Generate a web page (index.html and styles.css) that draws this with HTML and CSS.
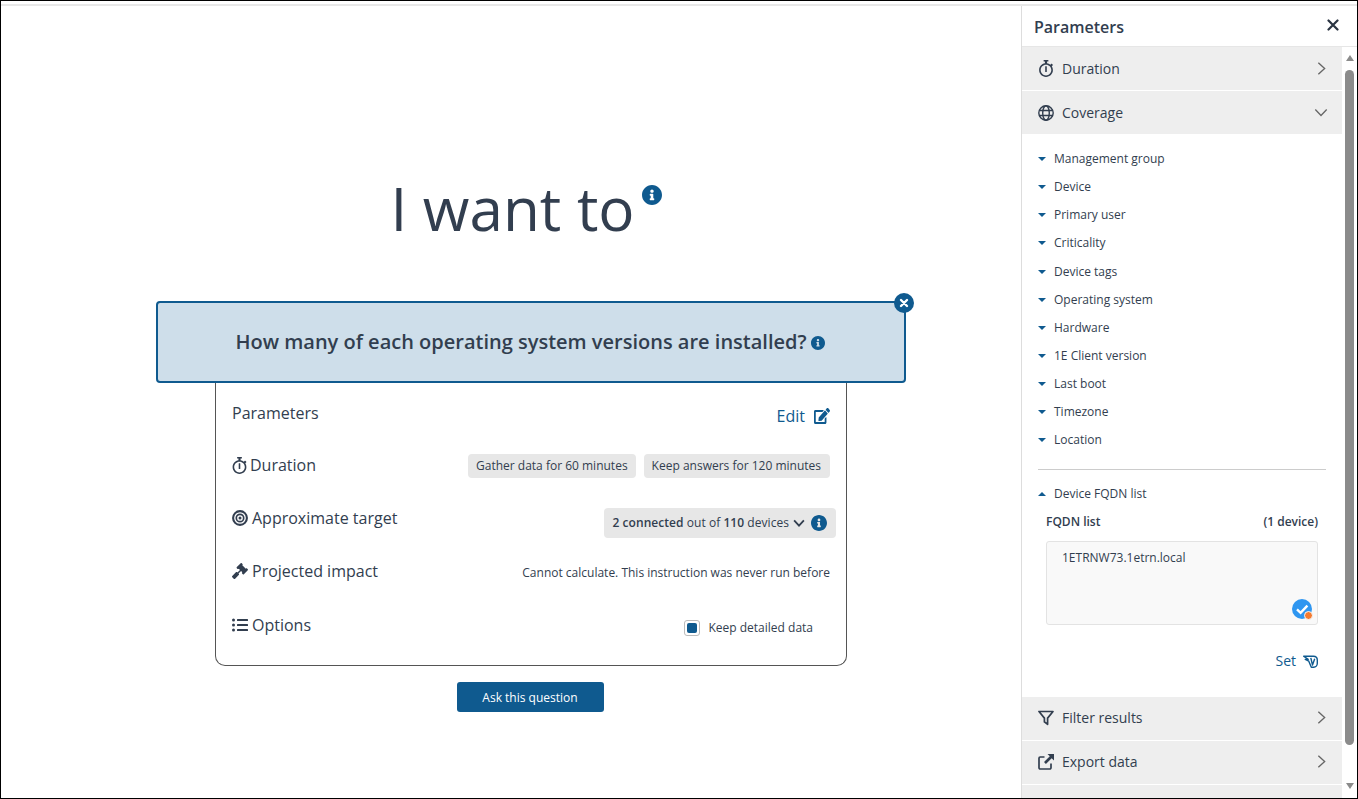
FILE: index.html
```html
<!DOCTYPE html>
<html lang="en">
<head>
<meta charset="utf-8">
<title>Parameters</title>
<link rel="stylesheet" href="styles.css">
</head>
<body>
<svg class="defs" width="0" height="0" aria-hidden="true">
  <symbol id="info" viewBox="8 8 496 496"><path fill="#0f5a8f" d="M256 8C119.043 8 8 119.083 8 256c0 136.997 111.043 248 248 248s248-111.003 248-248C504 119.083 392.957 8 256 8zm0 110c23.196 0 42 18.804 42 42s-18.804 42-42 42-42-18.804-42-42 18.804-42 42-42zm56 254c0 6.627-5.373 12-12 12h-88c-6.627 0-12-5.373-12-12v-24c0-6.627 5.373-12 12-12h12v-64h-12c-6.627 0-12-5.373-12-12v-24c0-6.627 5.373-12 12-12h64c6.627 0 12 5.373 12 12v100h12c6.627 0 12 5.373 12 12v24z"/></symbol>
  <symbol id="close-dot" viewBox="0 0 20 20"><circle cx="10" cy="10" r="10" fill="#0f5a8f"/><path d="M7 7l6 6M13 7l-6 6" stroke="#fff" stroke-width="2.400" stroke-linecap="round"/></symbol>
  <symbol id="watch" viewBox="0 0 448 512"><path fill="currentColor" d="M432 304c0 114.900-93.100 208-208 208S16 418.900 16 304c0-104 76.300-190.200 176-205.500V48h-28c-6.600 0-12-5.400-12-12V12c0-6.600 5.400-12 12-12h120c6.600 0 12 5.400 12 12v24c0 6.600-5.400 12-12 12h-28v50.500c37.500 5.800 71.700 21.600 99.700 44.600l27.500-27.500c4.700-4.700 12.300-4.700 17 0l28.300 28.300c4.700 4.700 4.700 12.300 0 17l-29.400 29.400-.6.600C419.700 223.300 432 262.200 432 304zm-48 0c0-88.400-71.600-160-160-160S64 215.600 64 304s71.600 160 160 160 160-71.600 160-160zm-136 48V200c0-6.600-5.400-12-12-12h-24c-6.600 0-12 5.400-12 12v152c0 6.600 5.400 12 12 12h24c6.600 0 12-5.400 12-12z"/></symbol>
  <symbol id="chev-r" viewBox="0 0 10 16"><path d="M1.500 1.500L8.500 8l-7 6.500" fill="none" stroke="currentColor" stroke-width="1.500"/></symbol>
  <symbol id="chev-d" viewBox="0 0 16 10"><path d="M1.500 1.500L8 8.500l6.500-7" fill="none" stroke="currentColor" stroke-width="1.500"/></symbol>
  <symbol id="chev-bold" viewBox="0 0 16 10"><path d="M1.500 1.500L8 8.500l6.500-7" fill="none" stroke="currentColor" stroke-width="2.400"/></symbol>
  <symbol id="globe" viewBox="0 0 16 16"><g fill="none" stroke="currentColor" stroke-width="1.400"><circle cx="8" cy="8" r="7.200"/><ellipse cx="8" cy="8" rx="3.300" ry="7.200"/><path d="M1 5.500h14M1 10.500h14"/></g></symbol>
  <symbol id="funnel" viewBox="0 0 16 15"><path d="M1 1h14L9.600 7.600V13.800L6.400 11.400V7.600z" fill="none" stroke="currentColor" stroke-width="1.700" stroke-linejoin="round"/></symbol>
  <symbol id="export" viewBox="0 0 16 16"><path d="M6.500 3H2.200A1.200 1.200 0 0 0 1 4.200v9.600A1.200 1.200 0 0 0 2.200 15h9.600a1.200 1.200 0 0 0 1.200-1.200V9.500" fill="none" stroke="currentColor" stroke-width="1.700"/><path d="M9.500 0H16v6.500l-2.300-2.300-5.800 5.800-1.900-1.900 5.800-5.800z" fill="currentColor"/></symbol>
  <symbol id="target" viewBox="0 0 16 16"><g fill="none" stroke="currentColor"><circle cx="8" cy="8" r="6.900" stroke-width="2.100"/><circle cx="8" cy="8" r="3.700" stroke-width="1.700"/></g><circle cx="8" cy="8" r="1.500" fill="currentColor"/></symbol>
  <symbol id="gavel" viewBox="0 0 512 512"><path fill="currentColor" d="M504.971 199.362l-22.627-22.627c-9.373-9.373-24.569-9.373-33.941 0l-5.657 5.657L329.608 69.255l5.657-5.657c9.373-9.373 9.373-24.569 0-33.941L312.638 7.029c-9.373-9.373-24.569-9.373-33.941 0L154.246 131.480c-9.373 9.373-9.373 24.569 0 33.941l22.627 22.627c9.373 9.373 24.569 9.373 33.941 0l5.657-5.657 39.598 39.598-81.040 81.040-5.657-5.657c-12.497-12.497-32.758-12.497-45.255 0L9.373 412.118c-12.497 12.497-12.497 32.758 0 45.255l45.255 45.255c12.497 12.497 32.758 12.497 45.255 0l114.745-114.745c12.497-12.497 12.497-32.758 0-45.255l-5.657-5.657 81.040-81.040 39.598 39.598-5.657 5.657c-9.373 9.373-9.373 24.569 0 33.941l22.627 22.627c9.373 9.373 24.569 9.373 33.941 0l124.451-124.451c9.372-9.372 9.372-24.568 0-33.941z"/></symbol>
  <symbol id="listic" viewBox="0 0 16 14"><g fill="currentColor"><circle cx="1.500" cy="2" r="1.500"/><circle cx="1.500" cy="7" r="1.500"/><circle cx="1.500" cy="12" r="1.500"/><rect x="5" y="1" width="11" height="2" rx=".5"/><rect x="5" y="6" width="11" height="2" rx=".5"/><rect x="5" y="11" width="11" height="2" rx=".5"/></g></symbol>
  <symbol id="edit" viewBox="0 0 576 512" preserveAspectRatio="none"><path fill="currentColor" d="M402.600 83.200l90.200 90.200c3.800 3.800 3.800 10 0 13.800L274.400 405.600l-92.800 10.300c-12.400 1.400-22.900-9.100-21.500-21.500l10.300-92.800L388.800 83.200c3.800-3.800 10-3.800 13.800 0zm162-22.900l-48.800-48.800c-15.200-15.200-39.900-15.200-55.200 0l-35.400 35.400c-3.800 3.800-3.800 10 0 13.800l90.200 90.200c3.800 3.800 10 3.800 13.800 0l35.400-35.400c15.200-15.300 15.200-40 0-55.200zM384 346.200V448H64V128h229.800c3.200 0 6.200-1.300 8.500-3.500l40-40c7.600-7.600 2.200-20.500-8.500-20.500H48C21.500 64 0 85.500 0 112v352c0 26.500 21.500 48 48 48h352c26.500 0 48-21.500 48-48V306.200c0-10.700-12.900-16-20.500-8.500l-40 40c-2.200 2.300-3.500 5.300-3.500 8.500z"/></symbol>
  <symbol id="hand" viewBox="0 0 15 13"><g fill="none" stroke="currentColor" stroke-width="1.400" stroke-linejoin="round"><path d="M.7 1.200h9.700c2.300 0 3.900 1.700 3.900 3.900v3.200c0 2.100-1.500 3.900-3.600 3.900H8.300L5.800 6.200 2.300 4.400h2.900z"/><path d="M7.800 2.800l1.700 7.200 2.200-6.200"/></g></symbol>
</svg>

<div class="frame">
  <div class="topline"></div>
  <div class="body-row">
    <main class="stage">
      <h1 class="title">I want to<svg class="ic title-info"><use href="#info"/></svg></h1>
      <div class="question-wrap">
        <section class="question">
          <span>How many of each operating system versions are installed?</span>
          <svg class="ic q-info"><use href="#info"/></svg>
          <svg class="ic q-close"><use href="#close-dot"/></svg>
        </section>
        <section class="card">
          <div class="row row-head">
            <div class="label">Parameters</div>
            <a class="edit">Edit<svg class="ic edit-ic"><use href="#edit"/></svg></a>
          </div>
          <div class="row row-duration">
            <div class="label label-up1"><svg class="ic lab-ic watch-ic"><use href="#watch"/></svg>Duration</div>
            <div class="chips"><span class="chip">Gather data for 60 minutes</span><span class="chip">Keep answers for 120 minutes</span></div>
          </div>
          <div class="row row-target">
            <div class="label label-up5"><svg class="ic lab-ic"><use href="#target"/></svg>Approximate target</div>
            <div class="chip chip-target"><b>2 connected</b>&nbsp;out of&nbsp;<b>110</b>&nbsp;devices<svg class="ic chev-t"><use href="#chev-bold"/></svg><svg class="ic t-info"><use href="#info"/></svg></div>
          </div>
          <div class="row row-impact">
            <div class="label label-up1"><svg class="ic lab-ic"><use href="#gavel"/></svg>Projected impact</div>
            <div class="note">Cannot calculate. This instruction was never run before</div>
          </div>
          <div class="row row-options">
            <div class="label"><svg class="ic lab-ic list-ic"><use href="#listic"/></svg>Options</div>
            <label class="check"><span class="box"><span class="box-fill"></span></span>Keep detailed data</label>
          </div>
        </section>
        <button class="ask" type="button">Ask this question</button>
      </div>
    </main>

    <aside class="panel">
      <header class="panel-head"><span>Parameters</span><svg class="panel-x" viewBox="0 0 12 12"><path d="M1.500 1.500l9 9M10.500 1.500l-9 9" stroke="currentColor" stroke-width="2.200" stroke-linecap="round"/></svg></header>
      <div class="panel-body">
        <div class="scroll-content">
          <div class="acc"><svg class="ic acc-ic watch-acc"><use href="#watch"/></svg><span class="acc-t">Duration</span><svg class="ic acc-chev"><use href="#chev-r"/></svg></div>
          <div class="acc"><svg class="ic acc-ic"><use href="#globe"/></svg><span class="acc-t">Coverage</span><svg class="ic acc-chev-d"><use href="#chev-d"/></svg></div>
          <div class="coverage">
            <ul class="tree">
              <li>Management group</li>
              <li>Device</li>
              <li>Primary user</li>
              <li>Criticality</li>
              <li>Device tags</li>
              <li>Operating system</li>
              <li>Hardware</li>
              <li>1E Client version</li>
              <li>Last boot</li>
              <li>Timezone</li>
              <li>Location</li>
            </ul>
            <hr class="sep">
            <div class="tree-open">Device FQDN list</div>
            <div class="fqdn-head"><b>FQDN list</b><b>(1 device)</b></div>
            <div class="fqdn-box">1ETRNW73.1etrn.local
              <span class="badge"><svg viewBox="0 0 10 10"><path d="M2.500 5.200l1.800 1.700 3.400-3.600" fill="none" stroke="#fff" stroke-width="1.200"/></svg><i class="badge-dot"></i></span>
            </div>
            <a class="set">Set<svg class="ic set-ic"><use href="#hand"/></svg></a>
          </div>
          <div class="acc acc-low"><svg class="ic acc-ic"><use href="#funnel"/></svg><span class="acc-t">Filter results</span><svg class="ic acc-chev"><use href="#chev-r"/></svg></div>
          <div class="acc acc-low"><svg class="ic acc-ic"><use href="#export"/></svg><span class="acc-t">Export data</span><svg class="ic acc-chev"><use href="#chev-r"/></svg></div>
          <div class="acc"></div>
        </div>
        <div class="scrollbar">
          <span class="arrow up"></span>
          <span class="thumb"></span>
          <span class="arrow down"></span>
        </div>
      </div>
    </aside>
  </div>
</div>
</body>
</html>
```

FILE: styles.css
```css
* { box-sizing: border-box; }
html, body { margin: 0; height: 100%; }
body { font-family: "Open Sans", "Liberation Sans", sans-serif; color: #323e4f; background: #fff; overflow: hidden; }
.defs { position: absolute; }
.ic { display: block; flex: none; }

.frame { width: 1358px; height: 799px; border: 1px solid #000; display: flex; flex-direction: column; overflow: hidden; background: #fff; }
.topline { height: 5px; border-bottom: 2px solid #e8e8e8; flex: none; }
.body-row { flex: 1; display: flex; min-height: 0; }

.stage { flex: 1; min-width: 0; padding-left: 40px; display: flex; flex-direction: column; align-items: center; }
.title { margin: 161px 10px 0 0; font-size: 60.2px; font-weight: 400; line-height: 82px; display: flex; color: #323e4f; height: 82px; }
.title-info { width: 20px; height: 20px; margin: 18px 0 0 7px; }
.question-wrap { margin-top: 52px; width: 750px; display: flex; flex-direction: column; align-items: center; }
.question { position: relative; width: 750px; height: 82px; padding: 0 2px 2px 0; background: #cedeea; border: 2px solid #0f5a8f; border-radius: 4px; display: flex; align-items: center; justify-content: center; font-size: 20px; font-weight: 600; color: #323e4f; }
.q-info { width: 14px; height: 14px; margin: 3px 0 0 4px; }
.q-close { position: absolute; top: -10px; right: -10px; width: 20px; height: 20px; }

.card { width: 632px; height: 283px; border: 1px solid #555; border-top: 0; border-radius: 0 0 10px 10px; padding: 0 16px; }
.row { display: flex; justify-content: space-between; align-items: center; }
.label { font-size: 16px; display: flex; align-items: center; color: #323e4f; line-height: 22px; }
.label-up1 { margin-top: -2px; }
.label-up5 { margin-top: -10px; }
.lab-ic { width: 16px; height: 16px; margin-right: 4px; }
.watch-ic { width: 15px; height: 17px; margin-right: 3px; }
.list-ic { height: 14px; }
.row-head { height: 34px; margin-top: 19px; align-items: flex-start; }
.edit { font-size: 16px; color: #0f5a8f; display: flex; align-items: center; margin-top: 3px; line-height: 22px; }
.edit-ic { width: 16px; height: 16px; margin-left: 9px; }
.row-duration { margin-top: 18px; height: 24px; }
.chips { display: flex; gap: 8px; }
.chip { background: #e7e7e7; border-radius: 4px; font-size: 12px; height: 24px; padding: 0 8px 1px; display: flex; align-items: center; color: #323e4f; }
.chip + .chip { padding-right: 9px; }
.row-target { margin-top: 30px; height: 30px; margin-right: -6px; }
.chip-target { height: 30px; padding: 0 9px 1px; letter-spacing: .05px; }
.chip-target b { font-weight: 600; }
.chev-t { width: 12px; height: 8px; margin: 1px 0 0 4px; }
.t-info { width: 16px; height: 16px; margin: 1px 0 0 6px; }
.row-impact { margin-top: 19px; height: 30px; }
.note { font-size: 12px; }
.row-options { margin-top: 23px; height: 30px; padding-right: 17px; }
.check { font-size: 12px; display: flex; align-items: center; margin-top: 5px; }
.box { width: 16px; height: 16px; border: 1px solid #bbb; border-radius: 3px; margin: 1px 8px 0 0; display: flex; align-items: center; justify-content: center; }
.box-fill { width: 10px; height: 10px; background: #0f5a8f; border-radius: 2px; }

.ask { margin: 16px 2px 0 0; width: 147px; height: 30px; background: #0f5a8f; color: #fff; border: 0; border-radius: 3px; font: 12px "Open Sans", sans-serif; }

.panel { width: 336px; flex: none; border-left: 1px solid #ddd; display: flex; flex-direction: column; min-height: 0; }
.panel-head { height: 41px; flex: none; display: flex; justify-content: space-between; align-items: center; padding: 2px 18px 0 12px; font-size: 16px; font-weight: 600; color: #323e4f; border-bottom: 1px solid #e6e6e6; }
.panel-x { width: 12px; height: 12px; margin-top: -4px; color: #2a3442; }
.panel-body { flex: 1; min-height: 0; display: flex; overflow: hidden; }
.scroll-content { flex: 1; min-width: 0; height: 800px; }
.acc { height: 43px; background: #eee; margin-bottom: 1px; display: flex; align-items: center; padding: 0 15px 0 16px; font-size: 14px; color: #323e4f; }
.acc-low { padding-bottom: 2px; }
.acc-ic { width: 16px; height: 16px; margin-right: 8px; }
.watch-acc { height: 17px; }
.acc-t { flex: 1; }
.acc-chev { width: 9px; height: 15px; color: #666; margin-right: 1px; }
.acc-chev-d { width: 14px; height: 9px; color: #666; margin-right: -1px; }
.coverage { height: 562px; padding: 10.15px 16px 0; }
.tree { list-style: none; margin: 0; padding: 0; }
.tree li { height: 28.1px; font-size: 12px; line-height: 28px; padding-left: 16px; position: relative; }
.tree li::before { content: ""; position: absolute; left: 0; top: 12px; border: 4px solid transparent; border-top-color: #0f5a8f; border-bottom: 0; }
.sep { border: 0; border-top: 1px solid #ccc; margin: 14.85px 0 0; }
.tree-open { font-size: 12px; padding-left: 16px; position: relative; line-height: 18px; margin-top: 15px; }
.tree-open::before { content: ""; position: absolute; left: 0; top: 7px; border: 4px solid transparent; border-bottom-color: #0f5a8f; border-top: 0; }
.fqdn-head { display: flex; justify-content: space-between; font-size: 12px; margin: 10px 8px 0; line-height: 18px; }
.fqdn-head b { font-weight: 600; }
.fqdn-box { position: relative; margin: 10px 8px 0; height: 84px; background: #f9f9f9; border: 1px solid #e3e3e3; border-radius: 3px; padding: 7px 15px; font-size: 12px; line-height: 17px; }
.badge { position: absolute; right: 5px; bottom: 5px; width: 20px; height: 20px; background: #2f96f0; border-radius: 50%; display: block; }
.badge svg { display: block; width: 20px; height: 20px; }
.badge-dot { position: absolute; right: -1px; bottom: -1px; width: 9px; height: 9px; background: #f47b30; border: 1.500px solid #f9f9f9; border-radius: 50%; }
.set { display: flex; justify-content: flex-end; align-items: center; margin: 26px 8px 0 0; font-size: 14px; color: #0f5a8f; line-height: 20px; }
.set-ic { width: 15px; height: 13px; margin-left: 7px; }

.scrollbar { width: 15px; flex: none; height: 100%; display: flex; flex-direction: column; align-items: center; background: #fff; }
.thumb { width: 9px; height: 675px; background: #8b8b8b; border-radius: 5px; margin-top: 9px; flex: none; }
.arrow { width: 0; height: 0; border-style: solid; border-color: transparent; flex: none; }
.arrow.up { border-width: 0 4.500px 6px; border-bottom-color: #8b8b8b; margin-top: 8px; }
.arrow.down { border-width: 6px 4.500px 0; border-top-color: #8b8b8b; margin-top: 38px; }
```
